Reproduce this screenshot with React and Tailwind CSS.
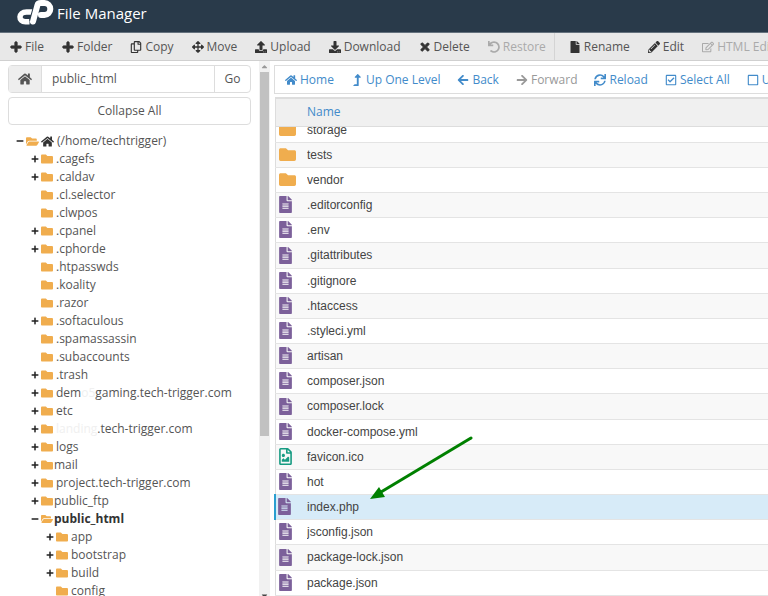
import {
  FaArrowLeft, FaArrowRight, FaArrowsAlt, FaCaretDown, FaCaretUp, FaDownload, FaFile, FaFileAlt,
  FaFolder, FaFolderOpen, FaHome, FaLevelUpAlt, FaPencilAlt, FaPlus, FaMinus, FaRegCheckSquare,
  FaRegCopy, FaRegEdit, FaRegFileImage, FaRegSquare, FaSync, FaTimes, FaUndo, FaUpload,
} from 'react-icons/fa';

const actions = [
  { label: 'File', icon: FaPlus, heavy: true },
  { label: 'Folder', icon: FaPlus, heavy: true },
  { label: 'Copy', icon: FaRegCopy },
  { label: 'Move', icon: FaArrowsAlt },
  { label: 'Upload', icon: FaUpload },
  { label: 'Download', icon: FaDownload },
  { label: 'Delete', icon: FaTimes, heavy: true },
  { label: 'Restore', icon: FaUndo, disabled: true },
  { label: 'Rename', icon: FaFile, divider: true },
  { label: 'Edit', icon: FaPencilAlt },
  { label: 'HTML Editor', icon: FaRegEdit, disabled: true },
];

const navLinks = [
  { label: 'Home', icon: FaHome },
  { label: 'Up One Level', icon: FaLevelUpAlt },
  { label: 'Back', icon: FaArrowLeft },
  { label: 'Forward', icon: FaArrowRight, disabled: true },
  { label: 'Reload', icon: FaSync },
  { label: 'Select All', icon: FaRegCheckSquare },
  { label: 'Unselect All', icon: FaRegSquare },
];

const tree = [
  { name: '.cagefs', more: true },
  { name: '.caldav', more: true },
  { name: '.cl.selector' },
  { name: '.clwpos' },
  { name: '.cpanel', more: true },
  { name: '.cphorde', more: true },
  { name: '.htpasswds' },
  { name: '.koality' },
  { name: '.razor' },
  { name: '.softaculous', more: true },
  { name: '.spamassassin' },
  { name: '.subaccounts' },
  { name: '.trash', more: true },
  { name: 'dem', faded: 'o5', rest: 'gaming.tech-trigger.com', more: true },
  { name: 'etc', more: true },
  { name: '', faded: 'landing', rest: '.tech-trigger.com', more: true },
  { name: 'logs', more: true },
  { name: 'mail', more: true, tight: true },
  { name: 'project.tech-trigger.com', more: true },
  { name: 'public_ftp', more: true, tight: true },
  {
    name: 'public_html', open: true, tight: true,
    children: [
      { name: 'app', more: true },
      { name: 'bootstrap', more: true },
      { name: 'build', more: true },
      { name: 'config' },
    ],
  },
];

const files = [
  { name: 'storage', type: 'folder' },
  { name: 'tests', type: 'folder' },
  { name: 'vendor', type: 'folder' },
  { name: '.editorconfig' },
  { name: '.env' },
  { name: '.gitattributes' },
  { name: '.gitignore' },
  { name: '.htaccess' },
  { name: '.styleci.yml' },
  { name: 'artisan' },
  { name: 'composer.json' },
  { name: 'composer.lock' },
  { name: 'docker-compose.yml' },
  { name: 'favicon.ico', type: 'image' },
  { name: 'hot' },
  { name: 'index.php', selected: true },
  { name: 'jsconfig.json' },
  { name: 'package-lock.json' },
  { name: 'package.json' },
];

function Logo() {
  const stem = 'M16 21.500L20.500 5Q21 3 24 3H27.500a5.800 6 0 0 1 0 12H24';
  return (
    <svg className="h-[26px] w-[37px]" viewBox="0 0 37 26" fill="none" stroke="#fff" strokeWidth="5.500" aria-hidden="true">
      <path d="M16 12H9.500C1 12 1 21.800 8.500 21.800H12.500" />
      <path d={stem} stroke="#293a4a" strokeWidth="8" />
      <path d={stem} strokeWidth="6" strokeLinecap="round" />
    </svg>
  );
}

function TreeItem({ item }) {
  const Folder = item.open ? FaFolderOpen : FaFolder;
  return (
    <li>
      <div className="flex h-[18px] items-center whitespace-nowrap">
        <button type="button" className="flex w-[10px] shrink-0 justify-start text-[#222]" aria-label={item.more || item.open ? 'Toggle folder' : undefined} disabled={!item.more && !item.open}>
          {item.more && <FaPlus className="size-2" />}
          {item.open && <FaMinus className="size-2" />}
        </button>
        <Folder className="size-3 shrink-0 text-[#f0ad4e]" />
        <span className={`${item.tight ? 'ml-px' : 'ml-[3px]'} ${item.open ? 'font-bold text-[#333]' : ''}`}>
          {item.name}
          {item.faded && <span className="text-[#f0f0f0]">{item.faded}</span>}
          {item.rest}
        </span>
      </div>
      {item.children && (
        <ul className="pl-[15px]">
          {item.children.map((child) => <TreeItem key={child.name} item={child} />)}
        </ul>
      )}
    </li>
  );
}

function FileIcon({ type }) {
  if (type === 'folder') return <FaFolder className="size-[17px] text-[#f0ad4e]" />;
  if (type === 'image') return <FaRegFileImage className="size-[17px] -ml-0.5 text-[#179b82]" />;
  return <FaFileAlt className="size-[17px] -ml-0.5 text-[#7c609a]" />;
}

function Arrow() {
  return (
    <svg className="pointer-events-none absolute bottom-[18px] left-[62px] z-10 h-[66px] w-[104px]" viewBox="0 0 104 66" aria-hidden="true">
      <path d="M102 3L12 57" stroke="#008000" strokeWidth="3" strokeLinecap="round" />
      <path d="M1 64L10 52L16 62Z" fill="#008000" />
    </svg>
  );
}

export default function App() {
  return (
    <div className="flex h-screen flex-col overflow-hidden bg-white font-['Open_Sans',sans-serif] text-xs leading-[18px] text-[#555]">
      <header className="flex h-[33px] shrink-0 items-start gap-[3px] border-b border-[#64717d] bg-[#293a4a] pl-[17px] text-white">
        <Logo />
        <h1 className="text-[15px] leading-[26px]">File Manager</h1>
      </header>

      <div className="flex h-7 shrink-0 overflow-hidden border-b border-[#d0d0d0] bg-[#e8e8e8]">
        {actions.map(({ label, icon: Icon, disabled, divider, heavy }) => (
          <button
            key={label}
            type="button"
            disabled={disabled}
            className={`flex shrink-0 items-center gap-[3px] whitespace-nowrap pr-2 ${divider ? 'border-l border-[#d4d4d4] pl-[14px]' : 'pl-[10px]'} ${disabled ? 'text-[#aaa]' : ''}`}
          >
            <Icon className={`size-3 ${disabled ? '' : 'text-[#333]'} ${heavy ? 'stroke-current stroke-[40]' : ''}`} />
            {label}
          </button>
        ))}
      </div>

      <div className="flex min-h-0 flex-1">
        <aside className="w-[259px] shrink-0 overflow-hidden pt-1 pr-2 pl-2">
          <form className="flex h-7 rounded-sm border border-[#ddd]" onSubmit={(e) => e.preventDefault()}>
            <button type="button" aria-label="Home directory" className="flex w-[33px] items-center justify-center border-r border-[#ddd] bg-[#eee]">
              <FaHome className="size-[14px]" />
            </button>
            <input aria-label="Path" defaultValue="public_html" className="min-w-0 flex-1 px-[10px] outline-none" />
            <button type="submit" className="w-9 border-l border-[#ddd]">Go</button>
          </form>
          <button type="button" className="mt-1 block h-7 w-full rounded-sm border border-[#ddd]">Collapse All</button>

          <div className="mt-[7px] ml-2 flex h-[18px] items-center">
            <button type="button" aria-label="Toggle home" className="w-[10px] text-[#222]"><FaMinus className="size-2" /></button>
            <FaFolderOpen className="size-[13px] text-[#f0ad4e]" />
            <FaHome className="ml-[2px] size-[13px] text-[#333]" />
            <span className="ml-[3px]">(/home/techtrigger)</span>
          </div>
          <ul className="pl-[23px]">
            {tree.map((item) => <TreeItem key={item.name + item.rest} item={item} />)}
          </ul>
        </aside>

        <div className="flex w-[11px] shrink-0 flex-col items-center bg-[#f1f1f1]" aria-hidden="true">
          <FaCaretUp className="my-px size-[9px] shrink-0 text-[#999]" />
          <div className="h-[68%] w-[9px] bg-[#c1c1c1]" />
          <FaCaretDown className="mt-auto -mb-1 size-[9px] shrink-0 text-[#444]" />
        </div>

        <main className="ml-1 flex min-w-0 flex-1 flex-col overflow-hidden pt-1">
          <nav className="flex h-[29px] shrink-0 items-center gap-[17px] overflow-hidden border border-r-0 border-[#ddd] pl-[10px]">
            {navLinks.map(({ label, icon: Icon, disabled }) => (
              <a key={label} href="#" className={`flex shrink-0 items-center gap-[3px] whitespace-nowrap ${disabled ? 'text-[#999]' : 'text-[#428bca]'}`}>
                <Icon className="size-3" />
                {label}
              </a>
            ))}
          </nav>

          <table className="mt-[3px] w-full border-collapse border-t-2 border-l border-[#ddd] text-left">
            <thead>
              <tr className="h-7 border-b border-[#ddd] bg-[#f0f0f0]">
                <th className="w-8" aria-label="Type" />
                <th className="p-0 font-normal text-[#428bca]">Name</th>
              </tr>
            </thead>
            <tbody className="font-['Liberation_Sans',sans-serif] text-xs text-[#444]">
              {files.map(({ name, type, selected }, i) => (
                <tr key={name} className={`border-b border-[#e4e4e4] nth-[6n]:h-[26px] ${selected ? 'bg-[#d7ebf8]' : 'odd:bg-white even:bg-[#f8f8f8]'}`}>
                  <td className={`p-0 ${selected ? 'border-l-2 border-l-[#2a9fd0] pl-[2px]' : 'pl-[3px]'}`}>
                    <div className={`flex items-end overflow-hidden ${i === 0 ? 'h-[15px]' : 'h-6'}`}>
                      <div className="flex h-6 shrink-0 items-center"><FileIcon type={type} /></div>
                    </div>
                  </td>
                  <td className={`p-0 ${selected ? 'relative' : ''}`}>
                    <div className={`flex items-end overflow-hidden ${i === 0 ? 'h-[15px]' : 'h-6'}`}>
                      <span className="leading-6">{name}</span>
                    </div>
                    {selected && <Arrow />}
                  </td>
                </tr>
              ))}
            </tbody>
          </table>
        </main>
      </div>
    </div>
  );
}
